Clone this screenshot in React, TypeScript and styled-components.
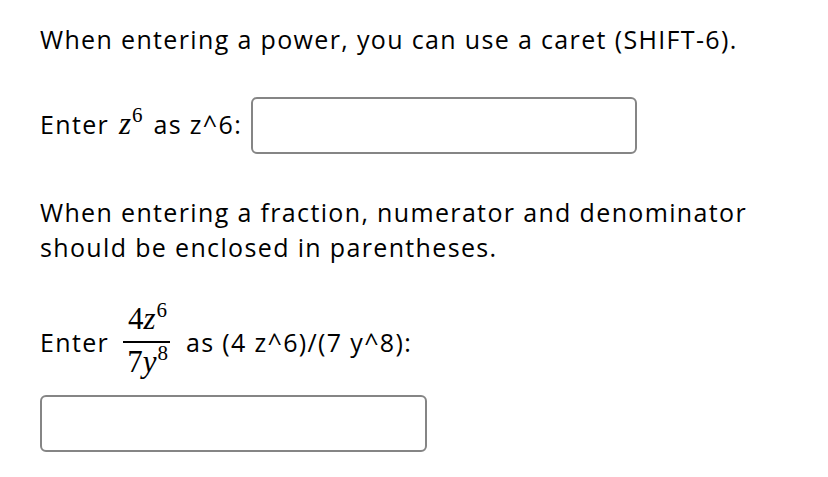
import React from "react";
import styled, { createGlobalStyle } from "styled-components";

const GlobalStyle = createGlobalStyle`
  body {
    margin: 0;
    background: #ffffff;
    color: #000000;
    font-family: "Open Sans", "DejaVu Sans", sans-serif;
  }
`;

const Page = styled.div`
  padding: 22px 0 0 40px;
  font-size: 25px;
  line-height: 35px;
  letter-spacing: 1.35px;
`;

const Para = styled.p<{ $gap?: number }>`
  margin: 0 0 ${(p) => p.$gap ?? 0}px 0;
`;

const Row = styled.div<{ $gap?: number }>`
  display: flex;
  align-items: center;
  gap: 9px;
  margin-bottom: ${(p) => p.$gap ?? 0}px;
`;

const Answer = styled.input<{ $width: number }>`
  width: ${(p) => p.$width}px;
  height: 57px;
  box-sizing: border-box;
  border: 2px solid #858585;
  border-radius: 6px;
  background: #fff;
  outline: none;
  font-size: 22px;
  padding: 0 10px;
`;

const MathText = styled.span`
  display: inline-block;
  margin: 0 3px 0 2px;
  font-family: "Liberation Serif", "DejaVu Serif", serif;
  font-size: 31px;
  line-height: 35px;
  letter-spacing: 0;
  white-space: nowrap;
`;

const MathVar = styled.i`
  font-family: "Liberation Serif", "DejaVu Serif", serif;
  font-style: italic;
  margin-right: 1px;
`;

const Sup = styled.span`
  display: inline-block;
  font-size: 21px;
  transform: translateY(-12px);
`;

const Frac = styled.span`
  display: inline-flex;
  flex-direction: column;
  align-items: center;
  margin: 0 7px 0 5px;
`;

const FracPart = styled.span`
  display: block;
  padding: 0 2px 0 4px;
  font-family: "Liberation Serif", "DejaVu Serif", serif;
  font-size: 31px;
  line-height: 37px;
  letter-spacing: 0;
  white-space: nowrap;
`;

const FracBar = styled.span`
  align-self: stretch;
  height: 2px;
  background: #000;
`;

export default function App() {
  return (
    <>
      <GlobalStyle />
      <Page>
        <Para $gap={40}>When entering a power, you can use a caret (SHIFT-6).</Para>
        <Row $gap={41}>
          <span>
            Enter{" "}
            <MathText>
              <MathVar>z</MathVar>
              <Sup>6</Sup>
            </MathText>{" "}
            as z^6:
          </span>
          <Answer $width={386} />
        </Row>
        <Para $gap={35}>
          When entering a fraction, numerator and denominator
          <br />
          should be enclosed in parentheses.
        </Para>
        <Row $gap={11}>
          <span>Enter</span>
          <Frac>
            <FracPart>
              4<MathVar>z</MathVar>
              <Sup>6</Sup>
            </FracPart>
            <FracBar />
            <FracPart>
              7<MathVar>y</MathVar>
              <Sup>8</Sup>
            </FracPart>
          </Frac>
          <span>as (4 z^6)/(7 y^8):</span>
        </Row>
        <Answer $width={387} />
      </Page>
    </>
  );
}
